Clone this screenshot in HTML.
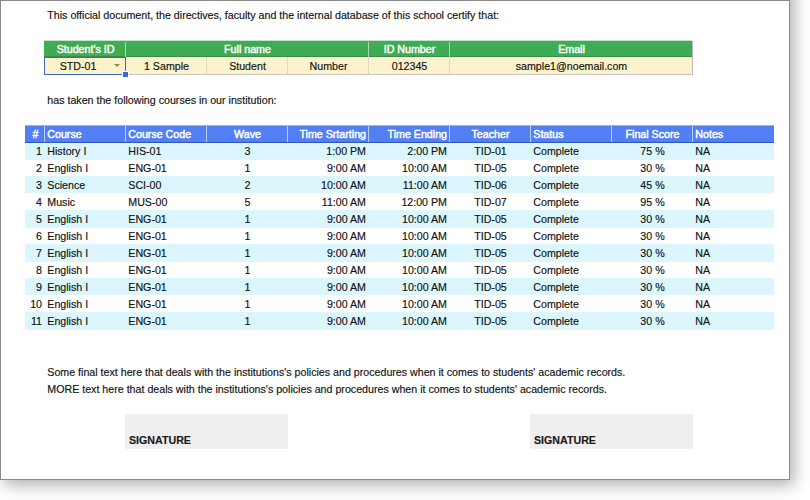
<!DOCTYPE html>
<html><head><meta charset="utf-8"><style>
html,body{margin:0;padding:0;background:#fff;width:810px;height:500px;overflow:hidden;position:relative}
#shadow{position:absolute;left:0;top:-30px;width:790px;height:510px;box-shadow:4px 5px 15px rgba(0,0,0,0.32)}
#page{position:absolute;left:0;top:0;width:788px;height:478px;border:1px solid #8a8a8a;background:#fff}
.box{position:absolute}
.t{position:absolute;font-family:"Liberation Sans",sans-serif;font-size:10.67px;color:#111;white-space:nowrap;-webkit-text-stroke:0.15px currentColor}
.h{color:#fff;-webkit-text-stroke:0.45px #fff}
.b{font-weight:bold;color:#1a1a1a}
</style></head><body>
<div id="shadow"></div><div id="page"></div>
<div class="t " style="left:47.3px;top:7px;height:17px;line-height:17px;">This official document, the directives, faculty and the internal database of this school certify that:</div>
<div class="box" style="left:44px;top:40px;width:648px;height:1px;background:#c2e2ca"></div>
<div class="box" style="left:44px;top:41px;width:648px;height:1px;background:#5a9a68"></div>
<div class="box" style="left:44px;top:42px;width:648px;height:15px;background:#3fab55"></div>
<div class="box" style="left:44px;top:57px;width:648px;height:17px;background:#fcf2cb"></div>
<div class="box" style="left:44px;top:74px;width:649px;height:1px;background:#c9c3c6"></div>
<div class="box" style="left:692px;top:41px;width:1px;height:34px;background:#bdb7c2"></div>
<div class="box" style="left:44px;top:56px;width:648px;height:1px;background:#3b8d4e"></div>
<div class="box" style="left:125px;top:42px;width:1px;height:15px;background:#a8d8b2"></div>
<div class="box" style="left:368px;top:42px;width:1px;height:15px;background:#a8d8b2"></div>
<div class="box" style="left:449px;top:42px;width:1px;height:15px;background:#a8d8b2"></div>
<div class="box" style="left:125px;top:57px;width:1px;height:17px;background:#e0d8c4"></div>
<div class="box" style="left:206px;top:57px;width:1px;height:17px;background:#e0d8c4"></div>
<div class="box" style="left:287px;top:57px;width:1px;height:17px;background:#e0d8c4"></div>
<div class="box" style="left:368px;top:57px;width:1px;height:17px;background:#e0d8c4"></div>
<div class="box" style="left:449px;top:57px;width:1px;height:17px;background:#e0d8c4"></div>
<div class="t h" style="left:45px;width:81px;top:41px;height:17px;line-height:17px;text-align:center;">Student's ID</div>
<div class="t h" style="left:126px;width:243px;top:41px;height:17px;line-height:17px;text-align:center;">Full name</div>
<div class="t h" style="left:369px;width:81px;top:41px;height:17px;line-height:17px;text-align:center;">ID Number</div>
<div class="t h" style="left:450px;width:243px;top:41px;height:17px;line-height:17px;text-align:center;">Email</div>
<div class="t " style="left:45px;width:66px;top:58px;height:17px;line-height:17px;text-align:center;">STD-01</div>
<div class="t " style="left:126px;width:81px;top:58px;height:17px;line-height:17px;text-align:center;">1 Sample</div>
<div class="t " style="left:207px;width:81px;top:58px;height:17px;line-height:17px;text-align:center;">Student</div>
<div class="t " style="left:288px;width:81px;top:58px;height:17px;line-height:17px;text-align:center;">Number</div>
<div class="t " style="left:369px;width:81px;top:58px;height:17px;line-height:17px;text-align:center;">012345</div>
<div class="t " style="left:450px;width:243px;top:58px;height:17px;line-height:17px;text-align:center;">sample1@noemail.com</div>
<div class="box" style="left:44px;top:57px;border:1px solid #3f66b8;box-sizing:border-box;width:82px;height:18px"></div>
<div class="box" style="left:122px;top:71px;width:5px;height:5px;background:#3a66dd;border:1px solid #fff"></div>
<div class="box" style="left:114px;top:64px;width:0;height:0;border-left:3px solid transparent;border-right:3px solid transparent;border-top:3.5px solid #a67f2c"></div>
<div class="t " style="left:47.3px;top:92px;height:17px;line-height:17px;">has taken the following courses in our institution:</div>
<div class="box" style="left:25px;top:125px;width:749px;height:1px;background:#b4aec0"></div>
<div class="box" style="left:25px;top:126px;width:749px;height:17px;background:#527ff3"></div>
<div class="box" style="left:25px;top:142px;width:749px;height:1px;background:#2f55b5"></div>
<div class="box" style="left:44px;top:126px;width:1px;height:16px;background:#b9cdf5"></div>
<div class="box" style="left:125px;top:126px;width:1px;height:16px;background:#b9cdf5"></div>
<div class="box" style="left:206px;top:126px;width:1px;height:16px;background:#b9cdf5"></div>
<div class="box" style="left:287px;top:126px;width:1px;height:16px;background:#b9cdf5"></div>
<div class="box" style="left:368px;top:126px;width:1px;height:16px;background:#b9cdf5"></div>
<div class="box" style="left:449px;top:126px;width:1px;height:16px;background:#b9cdf5"></div>
<div class="box" style="left:530px;top:126px;width:1px;height:16px;background:#b9cdf5"></div>
<div class="box" style="left:611px;top:126px;width:1px;height:16px;background:#b9cdf5"></div>
<div class="box" style="left:692px;top:126px;width:1px;height:16px;background:#b9cdf5"></div>
<div class="box" style="left:25px;top:143px;width:749px;height:17px;background:#dbf6fd"></div>
<div class="box" style="left:25px;top:176px;width:749px;height:17px;background:#dbf6fd"></div>
<div class="box" style="left:25px;top:210px;width:749px;height:18px;background:#dbf6fd"></div>
<div class="box" style="left:25px;top:244px;width:749px;height:18px;background:#dbf6fd"></div>
<div class="box" style="left:25px;top:278px;width:749px;height:17px;background:#dbf6fd"></div>
<div class="box" style="left:25px;top:312px;width:749px;height:18px;background:#dbf6fd"></div>
<div class="t h" style="left:26px;width:19px;top:126px;height:17px;line-height:17px;text-align:center;">#</div>
<div class="t h" style="left:47.3px;top:126px;height:17px;line-height:17px;">Course</div>
<div class="t h" style="left:128.3px;top:126px;height:17px;line-height:17px;">Course Code</div>
<div class="t h" style="left:207px;width:81px;top:126px;height:17px;line-height:17px;text-align:center;">Wave</div>
<div class="t h" style="left:287px;width:79px;top:126px;height:17px;line-height:17px;text-align:right;">Time Srtarting</div>
<div class="t h" style="left:368px;width:79px;top:126px;height:17px;line-height:17px;text-align:right;">Time Ending</div>
<div class="t h" style="left:450px;width:81px;top:126px;height:17px;line-height:17px;text-align:center;">Teacher</div>
<div class="t h" style="left:533.3px;top:126px;height:17px;line-height:17px;">Status</div>
<div class="t h" style="left:612px;width:81px;top:126px;height:17px;line-height:17px;text-align:center;">Final Score</div>
<div class="t h" style="left:695.3px;top:126px;height:17px;line-height:17px;">Notes</div>
<div class="t " style="left:25px;width:17px;top:143px;height:17px;line-height:17px;text-align:right;">1</div>
<div class="t " style="left:47.3px;top:143px;height:17px;line-height:17px;">History I</div>
<div class="t " style="left:128.3px;top:143px;height:17px;line-height:17px;">HIS-01</div>
<div class="t " style="left:207px;width:81px;top:143px;height:17px;line-height:17px;text-align:center;">3</div>
<div class="t " style="left:287px;width:79px;top:143px;height:17px;line-height:17px;text-align:right;">1:00 PM</div>
<div class="t " style="left:368px;width:79px;top:143px;height:17px;line-height:17px;text-align:right;">2:00 PM</div>
<div class="t " style="left:450px;width:81px;top:143px;height:17px;line-height:17px;text-align:center;">TID-01</div>
<div class="t " style="left:533.3px;top:143px;height:17px;line-height:17px;">Complete</div>
<div class="t " style="left:612px;width:81px;top:143px;height:17px;line-height:17px;text-align:center;">75 %</div>
<div class="t " style="left:695.3px;top:143px;height:17px;line-height:17px;">NA</div>
<div class="t " style="left:25px;width:17px;top:160px;height:17px;line-height:17px;text-align:right;">2</div>
<div class="t " style="left:47.3px;top:160px;height:17px;line-height:17px;">English I</div>
<div class="t " style="left:128.3px;top:160px;height:17px;line-height:17px;">ENG-01</div>
<div class="t " style="left:207px;width:81px;top:160px;height:17px;line-height:17px;text-align:center;">1</div>
<div class="t " style="left:287px;width:79px;top:160px;height:17px;line-height:17px;text-align:right;">9:00 AM</div>
<div class="t " style="left:368px;width:79px;top:160px;height:17px;line-height:17px;text-align:right;">10:00 AM</div>
<div class="t " style="left:450px;width:81px;top:160px;height:17px;line-height:17px;text-align:center;">TID-05</div>
<div class="t " style="left:533.3px;top:160px;height:17px;line-height:17px;">Complete</div>
<div class="t " style="left:612px;width:81px;top:160px;height:17px;line-height:17px;text-align:center;">30 %</div>
<div class="t " style="left:695.3px;top:160px;height:17px;line-height:17px;">NA</div>
<div class="t " style="left:25px;width:17px;top:177px;height:17px;line-height:17px;text-align:right;">3</div>
<div class="t " style="left:47.3px;top:177px;height:17px;line-height:17px;">Science</div>
<div class="t " style="left:128.3px;top:177px;height:17px;line-height:17px;">SCI-00</div>
<div class="t " style="left:207px;width:81px;top:177px;height:17px;line-height:17px;text-align:center;">2</div>
<div class="t " style="left:287px;width:79px;top:177px;height:17px;line-height:17px;text-align:right;">10:00 AM</div>
<div class="t " style="left:368px;width:79px;top:177px;height:17px;line-height:17px;text-align:right;">11:00 AM</div>
<div class="t " style="left:450px;width:81px;top:177px;height:17px;line-height:17px;text-align:center;">TID-06</div>
<div class="t " style="left:533.3px;top:177px;height:17px;line-height:17px;">Complete</div>
<div class="t " style="left:612px;width:81px;top:177px;height:17px;line-height:17px;text-align:center;">45 %</div>
<div class="t " style="left:695.3px;top:177px;height:17px;line-height:17px;">NA</div>
<div class="t " style="left:25px;width:17px;top:194px;height:17px;line-height:17px;text-align:right;">4</div>
<div class="t " style="left:47.3px;top:194px;height:17px;line-height:17px;">Music</div>
<div class="t " style="left:128.3px;top:194px;height:17px;line-height:17px;">MUS-00</div>
<div class="t " style="left:207px;width:81px;top:194px;height:17px;line-height:17px;text-align:center;">5</div>
<div class="t " style="left:287px;width:79px;top:194px;height:17px;line-height:17px;text-align:right;">11:00 AM</div>
<div class="t " style="left:368px;width:79px;top:194px;height:17px;line-height:17px;text-align:right;">12:00 PM</div>
<div class="t " style="left:450px;width:81px;top:194px;height:17px;line-height:17px;text-align:center;">TID-07</div>
<div class="t " style="left:533.3px;top:194px;height:17px;line-height:17px;">Complete</div>
<div class="t " style="left:612px;width:81px;top:194px;height:17px;line-height:17px;text-align:center;">95 %</div>
<div class="t " style="left:695.3px;top:194px;height:17px;line-height:17px;">NA</div>
<div class="t " style="left:25px;width:17px;top:211px;height:17px;line-height:17px;text-align:right;">5</div>
<div class="t " style="left:47.3px;top:211px;height:17px;line-height:17px;">English I</div>
<div class="t " style="left:128.3px;top:211px;height:17px;line-height:17px;">ENG-01</div>
<div class="t " style="left:207px;width:81px;top:211px;height:17px;line-height:17px;text-align:center;">1</div>
<div class="t " style="left:287px;width:79px;top:211px;height:17px;line-height:17px;text-align:right;">9:00 AM</div>
<div class="t " style="left:368px;width:79px;top:211px;height:17px;line-height:17px;text-align:right;">10:00 AM</div>
<div class="t " style="left:450px;width:81px;top:211px;height:17px;line-height:17px;text-align:center;">TID-05</div>
<div class="t " style="left:533.3px;top:211px;height:17px;line-height:17px;">Complete</div>
<div class="t " style="left:612px;width:81px;top:211px;height:17px;line-height:17px;text-align:center;">30 %</div>
<div class="t " style="left:695.3px;top:211px;height:17px;line-height:17px;">NA</div>
<div class="t " style="left:25px;width:17px;top:228px;height:17px;line-height:17px;text-align:right;">6</div>
<div class="t " style="left:47.3px;top:228px;height:17px;line-height:17px;">English I</div>
<div class="t " style="left:128.3px;top:228px;height:17px;line-height:17px;">ENG-01</div>
<div class="t " style="left:207px;width:81px;top:228px;height:17px;line-height:17px;text-align:center;">1</div>
<div class="t " style="left:287px;width:79px;top:228px;height:17px;line-height:17px;text-align:right;">9:00 AM</div>
<div class="t " style="left:368px;width:79px;top:228px;height:17px;line-height:17px;text-align:right;">10:00 AM</div>
<div class="t " style="left:450px;width:81px;top:228px;height:17px;line-height:17px;text-align:center;">TID-05</div>
<div class="t " style="left:533.3px;top:228px;height:17px;line-height:17px;">Complete</div>
<div class="t " style="left:612px;width:81px;top:228px;height:17px;line-height:17px;text-align:center;">30 %</div>
<div class="t " style="left:695.3px;top:228px;height:17px;line-height:17px;">NA</div>
<div class="t " style="left:25px;width:17px;top:245px;height:17px;line-height:17px;text-align:right;">7</div>
<div class="t " style="left:47.3px;top:245px;height:17px;line-height:17px;">English I</div>
<div class="t " style="left:128.3px;top:245px;height:17px;line-height:17px;">ENG-01</div>
<div class="t " style="left:207px;width:81px;top:245px;height:17px;line-height:17px;text-align:center;">1</div>
<div class="t " style="left:287px;width:79px;top:245px;height:17px;line-height:17px;text-align:right;">9:00 AM</div>
<div class="t " style="left:368px;width:79px;top:245px;height:17px;line-height:17px;text-align:right;">10:00 AM</div>
<div class="t " style="left:450px;width:81px;top:245px;height:17px;line-height:17px;text-align:center;">TID-05</div>
<div class="t " style="left:533.3px;top:245px;height:17px;line-height:17px;">Complete</div>
<div class="t " style="left:612px;width:81px;top:245px;height:17px;line-height:17px;text-align:center;">30 %</div>
<div class="t " style="left:695.3px;top:245px;height:17px;line-height:17px;">NA</div>
<div class="t " style="left:25px;width:17px;top:262px;height:17px;line-height:17px;text-align:right;">8</div>
<div class="t " style="left:47.3px;top:262px;height:17px;line-height:17px;">English I</div>
<div class="t " style="left:128.3px;top:262px;height:17px;line-height:17px;">ENG-01</div>
<div class="t " style="left:207px;width:81px;top:262px;height:17px;line-height:17px;text-align:center;">1</div>
<div class="t " style="left:287px;width:79px;top:262px;height:17px;line-height:17px;text-align:right;">9:00 AM</div>
<div class="t " style="left:368px;width:79px;top:262px;height:17px;line-height:17px;text-align:right;">10:00 AM</div>
<div class="t " style="left:450px;width:81px;top:262px;height:17px;line-height:17px;text-align:center;">TID-05</div>
<div class="t " style="left:533.3px;top:262px;height:17px;line-height:17px;">Complete</div>
<div class="t " style="left:612px;width:81px;top:262px;height:17px;line-height:17px;text-align:center;">30 %</div>
<div class="t " style="left:695.3px;top:262px;height:17px;line-height:17px;">NA</div>
<div class="t " style="left:25px;width:17px;top:279px;height:17px;line-height:17px;text-align:right;">9</div>
<div class="t " style="left:47.3px;top:279px;height:17px;line-height:17px;">English I</div>
<div class="t " style="left:128.3px;top:279px;height:17px;line-height:17px;">ENG-01</div>
<div class="t " style="left:207px;width:81px;top:279px;height:17px;line-height:17px;text-align:center;">1</div>
<div class="t " style="left:287px;width:79px;top:279px;height:17px;line-height:17px;text-align:right;">9:00 AM</div>
<div class="t " style="left:368px;width:79px;top:279px;height:17px;line-height:17px;text-align:right;">10:00 AM</div>
<div class="t " style="left:450px;width:81px;top:279px;height:17px;line-height:17px;text-align:center;">TID-05</div>
<div class="t " style="left:533.3px;top:279px;height:17px;line-height:17px;">Complete</div>
<div class="t " style="left:612px;width:81px;top:279px;height:17px;line-height:17px;text-align:center;">30 %</div>
<div class="t " style="left:695.3px;top:279px;height:17px;line-height:17px;">NA</div>
<div class="t " style="left:25px;width:17px;top:296px;height:17px;line-height:17px;text-align:right;">10</div>
<div class="t " style="left:47.3px;top:296px;height:17px;line-height:17px;">English I</div>
<div class="t " style="left:128.3px;top:296px;height:17px;line-height:17px;">ENG-01</div>
<div class="t " style="left:207px;width:81px;top:296px;height:17px;line-height:17px;text-align:center;">1</div>
<div class="t " style="left:287px;width:79px;top:296px;height:17px;line-height:17px;text-align:right;">9:00 AM</div>
<div class="t " style="left:368px;width:79px;top:296px;height:17px;line-height:17px;text-align:right;">10:00 AM</div>
<div class="t " style="left:450px;width:81px;top:296px;height:17px;line-height:17px;text-align:center;">TID-05</div>
<div class="t " style="left:533.3px;top:296px;height:17px;line-height:17px;">Complete</div>
<div class="t " style="left:612px;width:81px;top:296px;height:17px;line-height:17px;text-align:center;">30 %</div>
<div class="t " style="left:695.3px;top:296px;height:17px;line-height:17px;">NA</div>
<div class="t " style="left:25px;width:17px;top:313px;height:17px;line-height:17px;text-align:right;">11</div>
<div class="t " style="left:47.3px;top:313px;height:17px;line-height:17px;">English I</div>
<div class="t " style="left:128.3px;top:313px;height:17px;line-height:17px;">ENG-01</div>
<div class="t " style="left:207px;width:81px;top:313px;height:17px;line-height:17px;text-align:center;">1</div>
<div class="t " style="left:287px;width:79px;top:313px;height:17px;line-height:17px;text-align:right;">9:00 AM</div>
<div class="t " style="left:368px;width:79px;top:313px;height:17px;line-height:17px;text-align:right;">10:00 AM</div>
<div class="t " style="left:450px;width:81px;top:313px;height:17px;line-height:17px;text-align:center;">TID-05</div>
<div class="t " style="left:533.3px;top:313px;height:17px;line-height:17px;">Complete</div>
<div class="t " style="left:612px;width:81px;top:313px;height:17px;line-height:17px;text-align:center;">30 %</div>
<div class="t " style="left:695.3px;top:313px;height:17px;line-height:17px;">NA</div>
<div class="t " style="left:47.3px;top:364px;height:17px;line-height:17px;">Some final text here that deals with the institutions's policies and procedures when it comes to students' academic records.</div>
<div class="t " style="left:47.3px;top:381px;height:17px;line-height:17px;">MORE text here that deals with the institutions's policies and procedures when it comes to students' academic records.</div>
<div class="box" style="left:125px;top:414px;width:163px;height:35px;background:#efefef"></div>
<div class="box" style="left:530px;top:414px;width:163px;height:35px;background:#efefef"></div>
<div class="t b" style="left:129.0px;top:432px;height:17px;line-height:17px;">SIGNATURE</div>
<div class="t b" style="left:534.0px;top:432px;height:17px;line-height:17px;">SIGNATURE</div>
</body></html>
